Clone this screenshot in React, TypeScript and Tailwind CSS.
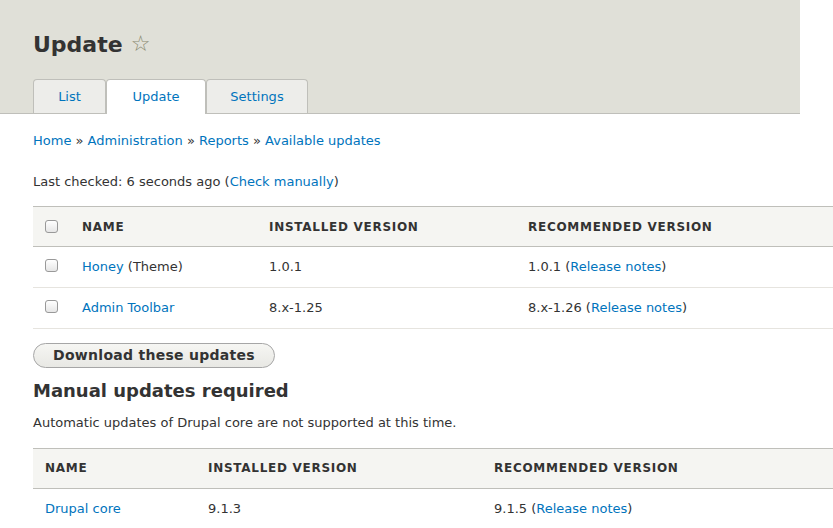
import React from "react";

const link = "text-[#0074bd]";
const Cb = () => (
  <span className="inline-block w-[13px] h-[13px] rounded-[3px] border border-[#999] bg-gradient-to-b from-[#fff] to-[#e6e6e6]" />
);

export default function App() {
  return (
    <div className="w-[833px] h-[528px] overflow-hidden bg-white text-[#333] text-[13px]" style={{ fontFamily: '"DejaVu Sans", sans-serif' }}>
      <div className="w-[800px] h-[114px] bg-[#e0e0d8] border-b border-[#bfbfba] px-[33px] pt-[29px] flex flex-col">
        <div className="flex items-center gap-[8px] h-[30px]">
          <h1 className="text-[22px] font-bold text-[#333]">Update</h1>
          <span className="text-[22px] text-[#8a8a70] leading-none">☆</span>
        </div>
        <div className="mt-auto flex items-end h-[35px]">
          <div className="w-[73px] h-[34px] border border-b-0 border-[#bfbfba] rounded-t-[4px] bg-[#ededea] flex items-center justify-center text-[#0074bd]">List</div>
          <div className="w-[100px] h-[35px] border border-b-0 border-[#bfbfba] rounded-t-[4px] bg-white flex items-center justify-center text-[#0074bd] -mb-px">Update</div>
          <div className="w-[102px] h-[34px] border border-b-0 border-[#bfbfba] rounded-t-[4px] bg-[#ededea] flex items-center justify-center text-[#0074bd]">Settings</div>
        </div>
      </div>
      <div className="pl-[33px]">
        <div className="mt-[17px]"><span className={link}>Home</span> » <span className={link}>Administration</span> » <span className={link}>Reports</span> » <span className={link}>Available updates</span></div>
        <div className="mt-[21px]">Last checked: 6 seconds ago (<span className={link}>Check manually</span>)</div>
        <div className="mt-[15px] w-[800px]">
          <div className="h-[41px] bg-[#f5f5f2] border-y border-[#bfbfba] flex items-center text-[12px] font-bold tracking-[0.06em]">
            <div className="w-[49px] pl-[12px] flex"><Cb /></div>
            <div className="w-[187px]">NAME</div>
            <div className="w-[259px]">INSTALLED VERSION</div>
            <div>RECOMMENDED VERSION</div>
          </div>
          {[
            [<><span className={link}>Honey</span> (Theme)</>, "1.0.1", "1.0.1"],
            [<span className={link}>Admin Toolbar</span>, "8.x-1.25", "8.x-1.26"],
          ].map((r, i) => (
            <div key={i} className="h-[41px] border-b border-[#e6e4df] flex items-center">
              <div className="w-[49px] pl-[12px] flex -mt-[4px]"><Cb /></div>
              <div className="w-[187px]">{r[0]}</div>
              <div className="w-[259px]">{r[1]}</div>
              <div>{r[2]} (<span className={link}>Release notes</span>)</div>
            </div>
          ))}
        </div>
        <button className="mt-[14px] w-[242px] h-[25px] rounded-full border border-[#a6a6a6] bg-gradient-to-b from-[#f6f6f3] to-[#e8e8e4] text-[14px] font-bold text-[#333] tracking-[0.02em]">Download these updates</button>
        <h2 className="mt-[9px] text-[18px] font-bold">Manual updates required</h2>
        <div className="mt-[9px]">Automatic updates of Drupal core are not supported at this time.</div>
        <div className="mt-[15px] w-[800px]">
          <div className="h-[41px] bg-[#f5f5f2] border-y border-[#bfbfba] flex items-center text-[12px] font-bold tracking-[0.06em] pl-[12px]">
            <div className="w-[163px]">NAME</div>
            <div className="w-[286px]">INSTALLED VERSION</div>
            <div>RECOMMENDED VERSION</div>
          </div>
          <div className="h-[41px] border-b border-[#e6e4df] flex items-center pl-[12px]">
            <div className="w-[163px] text-[#0074bd]">Drupal core</div>
            <div className="w-[286px]">9.1.3</div>
            <div>9.1.5 (<span className={link}>Release notes</span>)</div>
          </div>
        </div>
      </div>
    </div>
  );
}
